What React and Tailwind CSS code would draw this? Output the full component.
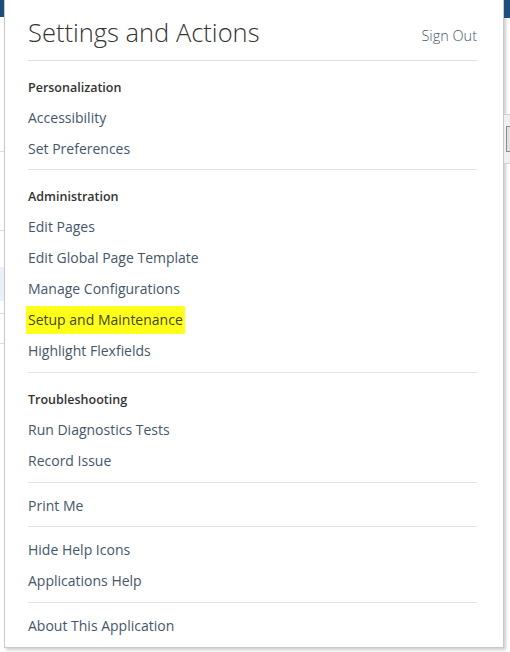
const sections = [
  { title: 'Personalization', items: ['Accessibility', 'Set Preferences'], pad: 'pt-[13px] pb-[5px]' },
  {
    title: 'Administration',
    items: [
      'Edit Pages',
      'Edit Global Page Template',
      'Manage Configurations',
      'Setup and Maintenance',
      'Highlight Flexfields',
    ],
    pad: 'pt-[13px] pb-[6px]',
  },
  { title: 'Troubleshooting', items: ['Run Diagnostics Tests', 'Record Issue'], pad: 'pt-[13px] pb-[6px]' },
  { items: ['Print Me'], pad: 'pt-[7px] pb-[5px]' },
  { items: ['Hide Help Icons', 'Applications Help'], pad: 'pt-[7px] pb-[6px]' },
  { items: ['About This Application'], pad: 'pt-[7px] pb-[7px]' },
]

function MenuLink({ label }) {
  const marked = label === 'Setup and Maintenance'
  return (
    <div className="flex h-[31px] items-center">
      <a
        href="#"
        className={`text-[14px] leading-none ${
          marked ? '-mx-[2px] bg-[#ffff1a] px-[2px] py-[7px] text-[#45451c]' : 'text-[#45566a]'
        }`}
      >
        {label}
      </a>
    </div>
  )
}

function Section({ section, last }) {
  return (
    <div className={`${section.pad} ${last ? '' : 'border-b border-[#e3e3e3]'}`}>
      {section.title && (
        <div className="flex h-[28px] items-center text-[12.5px] font-semibold text-[#333]">
          {section.title}
        </div>
      )}
      {section.items.map((item) => (
        <MenuLink key={item} label={item} />
      ))}
    </div>
  )
}

// the page under the popup only shows as thin strips on both sides
function LeftStrip() {
  return (
    <div className="flex w-[4px] shrink-0 flex-col">
      <div className="h-[17px] bg-[#1d4f7c]" />
      <div className="h-[135px] border-b border-[#d6dbe0]" />
      <div className="h-[79px] border-b border-[#d6dbe0]" />
      <div className="h-[36px]" />
      <div className="h-[34px] bg-[#e8f0f8]" />
      <div className="h-[13px] border-b border-[#d6dbe0]" />
      <div className="h-[30px] border-b border-[#d6dbe0]" />
    </div>
  )
}

function RightStrip() {
  return (
    <div className="flex w-[6px] shrink-0 flex-col">
      <div className="h-[18px] bg-[#1d4f7c]" />
      <div className="h-[96px]" />
      <div className="flex h-[50px] items-center border-y border-[#d0d0d0] bg-[#efefef] pl-[2px]">
        <div className="h-[26px] w-full border border-r-0 border-[#8a8a8a] bg-[#e2e2e2]" />
      </div>
    </div>
  )
}

export default function App() {
  return (
    <div className="flex h-[652px] w-[510px] items-start overflow-hidden bg-white font-['Open_Sans','Noto_Sans',sans-serif]">
      <LeftStrip />

      {/* settings popup */}
      <div className="h-[648px] w-[500px] shrink-0 border border-t-0 border-[#c9c9c9] bg-white pl-[23px] pr-[26px] shadow-[2px_2px_3px_rgba(0,0,0,0.2)]">
        <div className="flex h-[61px] items-center justify-between border-b border-[#e0e0e0] pt-[5px]">
          <h1 className="text-[25.5px] font-light leading-none text-[#333]">Settings and Actions</h1>
          <a href="#" className="mt-[6px] text-[14.5px] font-light text-[#45566a]">
            Sign Out
          </a>
        </div>
        {sections.map((s, i) => (
          <Section key={i} section={s} last={i === sections.length - 1} />
        ))}
      </div>

      <RightStrip />
    </div>
  )
}
